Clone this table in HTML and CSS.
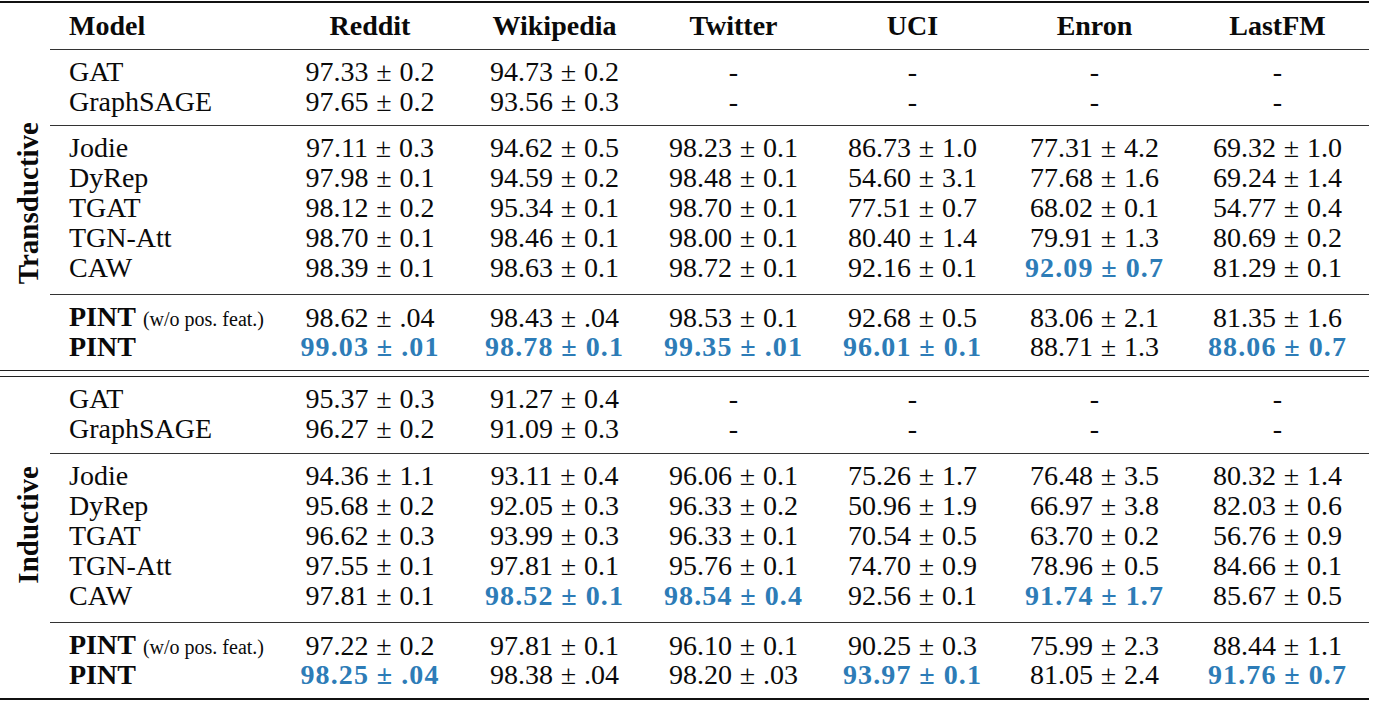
FILE: index.html
```html
<!DOCTYPE html>
<html>
<head>
<meta charset="utf-8">
<link rel="stylesheet" href="styles.css">
</head>
<body>
<div class="table">
  <div class="rule thick"></div>
  <div class="head-wrap">
    <div class="row head">
      <div class="c model">Model</div>
      <div class="c">Reddit</div>
      <div class="c">Wikipedia</div>
      <div class="c">Twitter</div>
      <div class="c">UCI</div>
      <div class="c">Enron</div>
      <div class="c">LastFM</div>
    </div>
  </div>
  <div class="rule mid indent"></div>

  <section class="part part-trans">
    <div class="side"><span class="side-label">Transductive</span></div>
    <div class="body">
      <div class="block b2">
        <div class="row"><div class="c model">GAT</div><div class="c"><span class="n">97.33<span class="pm">±</span>0.2</span></div><div class="c"><span class="n">94.73<span class="pm">±</span>0.2</span></div><div class="c">-</div><div class="c">-</div><div class="c">-</div><div class="c">-</div></div>
        <div class="row"><div class="c model">GraphSAGE</div><div class="c"><span class="n">97.65<span class="pm">±</span>0.2</span></div><div class="c"><span class="n">93.56<span class="pm">±</span>0.3</span></div><div class="c">-</div><div class="c">-</div><div class="c">-</div><div class="c">-</div></div>
      </div>
      <div class="rule mid"></div>
      <div class="block b5">
        <div class="row"><div class="c model">Jodie</div><div class="c"><span class="n">97.11<span class="pm">±</span>0.3</span></div><div class="c"><span class="n">94.62<span class="pm">±</span>0.5</span></div><div class="c"><span class="n">98.23<span class="pm">±</span>0.1</span></div><div class="c"><span class="n">86.73<span class="pm">±</span>1.0</span></div><div class="c"><span class="n">77.31<span class="pm">±</span>4.2</span></div><div class="c"><span class="n">69.32<span class="pm">±</span>1.0</span></div></div>
        <div class="row"><div class="c model">DyRep</div><div class="c"><span class="n">97.98<span class="pm">±</span>0.1</span></div><div class="c"><span class="n">94.59<span class="pm">±</span>0.2</span></div><div class="c"><span class="n">98.48<span class="pm">±</span>0.1</span></div><div class="c"><span class="n">54.60<span class="pm">±</span>3.1</span></div><div class="c"><span class="n">77.68<span class="pm">±</span>1.6</span></div><div class="c"><span class="n">69.24<span class="pm">±</span>1.4</span></div></div>
        <div class="row"><div class="c model">TGAT</div><div class="c"><span class="n">98.12<span class="pm">±</span>0.2</span></div><div class="c"><span class="n">95.34<span class="pm">±</span>0.1</span></div><div class="c"><span class="n">98.70<span class="pm">±</span>0.1</span></div><div class="c"><span class="n">77.51<span class="pm">±</span>0.7</span></div><div class="c"><span class="n">68.02<span class="pm">±</span>0.1</span></div><div class="c"><span class="n">54.77<span class="pm">±</span>0.4</span></div></div>
        <div class="row"><div class="c model">TGN-Att</div><div class="c"><span class="n">98.70<span class="pm">±</span>0.1</span></div><div class="c"><span class="n">98.46<span class="pm">±</span>0.1</span></div><div class="c"><span class="n">98.00<span class="pm">±</span>0.1</span></div><div class="c"><span class="n">80.40<span class="pm">±</span>1.4</span></div><div class="c"><span class="n">79.91<span class="pm">±</span>1.3</span></div><div class="c"><span class="n">80.69<span class="pm">±</span>0.2</span></div></div>
        <div class="row"><div class="c model">CAW</div><div class="c"><span class="n">98.39<span class="pm">±</span>0.1</span></div><div class="c"><span class="n">98.63<span class="pm">±</span>0.1</span></div><div class="c"><span class="n">98.72<span class="pm">±</span>0.1</span></div><div class="c"><span class="n">92.16<span class="pm">±</span>0.1</span></div><div class="c"><span class="n b">92.09<span class="pm">±</span>0.7</span></div><div class="c"><span class="n">81.29<span class="pm">±</span>0.1</span></div></div>
      </div>
      <div class="rule mid"></div>
      <div class="block b2">
        <div class="row"><div class="c model"><b>PINT</b> <small>(w/o pos. feat.)</small></div><div class="c"><span class="n">98.62<span class="pm">±</span>.04</span></div><div class="c"><span class="n">98.43<span class="pm">±</span>.04</span></div><div class="c"><span class="n">98.53<span class="pm">±</span>0.1</span></div><div class="c"><span class="n">92.68<span class="pm">±</span>0.5</span></div><div class="c"><span class="n">83.06<span class="pm">±</span>2.1</span></div><div class="c"><span class="n">81.35<span class="pm">±</span>1.6</span></div></div>
        <div class="row"><div class="c model"><b>PINT</b></div><div class="c"><span class="n b">99.03<span class="pm">±</span>.01</span></div><div class="c"><span class="n b">98.78<span class="pm">±</span>0.1</span></div><div class="c"><span class="n b">99.35<span class="pm">±</span>.01</span></div><div class="c"><span class="n b">96.01<span class="pm">±</span>0.1</span></div><div class="c"><span class="n">88.71<span class="pm">±</span>1.3</span></div><div class="c"><span class="n b">88.06<span class="pm">±</span>0.7</span></div></div>
      </div>
    </div>
  </section>

  <div class="double"></div>

  <section class="part part-ind">
    <div class="side"><span class="side-label">Inductive</span></div>
    <div class="body">
      <div class="block b2 b2x">
        <div class="row"><div class="c model">GAT</div><div class="c"><span class="n">95.37<span class="pm">±</span>0.3</span></div><div class="c"><span class="n">91.27<span class="pm">±</span>0.4</span></div><div class="c">-</div><div class="c">-</div><div class="c">-</div><div class="c">-</div></div>
        <div class="row"><div class="c model">GraphSAGE</div><div class="c"><span class="n">96.27<span class="pm">±</span>0.2</span></div><div class="c"><span class="n">91.09<span class="pm">±</span>0.3</span></div><div class="c">-</div><div class="c">-</div><div class="c">-</div><div class="c">-</div></div>
      </div>
      <div class="rule mid"></div>
      <div class="block b5">
        <div class="row"><div class="c model">Jodie</div><div class="c"><span class="n">94.36<span class="pm">±</span>1.1</span></div><div class="c"><span class="n">93.11<span class="pm">±</span>0.4</span></div><div class="c"><span class="n">96.06<span class="pm">±</span>0.1</span></div><div class="c"><span class="n">75.26<span class="pm">±</span>1.7</span></div><div class="c"><span class="n">76.48<span class="pm">±</span>3.5</span></div><div class="c"><span class="n">80.32<span class="pm">±</span>1.4</span></div></div>
        <div class="row"><div class="c model">DyRep</div><div class="c"><span class="n">95.68<span class="pm">±</span>0.2</span></div><div class="c"><span class="n">92.05<span class="pm">±</span>0.3</span></div><div class="c"><span class="n">96.33<span class="pm">±</span>0.2</span></div><div class="c"><span class="n">50.96<span class="pm">±</span>1.9</span></div><div class="c"><span class="n">66.97<span class="pm">±</span>3.8</span></div><div class="c"><span class="n">82.03<span class="pm">±</span>0.6</span></div></div>
        <div class="row"><div class="c model">TGAT</div><div class="c"><span class="n">96.62<span class="pm">±</span>0.3</span></div><div class="c"><span class="n">93.99<span class="pm">±</span>0.3</span></div><div class="c"><span class="n">96.33<span class="pm">±</span>0.1</span></div><div class="c"><span class="n">70.54<span class="pm">±</span>0.5</span></div><div class="c"><span class="n">63.70<span class="pm">±</span>0.2</span></div><div class="c"><span class="n">56.76<span class="pm">±</span>0.9</span></div></div>
        <div class="row"><div class="c model">TGN-Att</div><div class="c"><span class="n">97.55<span class="pm">±</span>0.1</span></div><div class="c"><span class="n">97.81<span class="pm">±</span>0.1</span></div><div class="c"><span class="n">95.76<span class="pm">±</span>0.1</span></div><div class="c"><span class="n">74.70<span class="pm">±</span>0.9</span></div><div class="c"><span class="n">78.96<span class="pm">±</span>0.5</span></div><div class="c"><span class="n">84.66<span class="pm">±</span>0.1</span></div></div>
        <div class="row"><div class="c model">CAW</div><div class="c"><span class="n">97.81<span class="pm">±</span>0.1</span></div><div class="c"><span class="n b">98.52<span class="pm">±</span>0.1</span></div><div class="c"><span class="n b">98.54<span class="pm">±</span>0.4</span></div><div class="c"><span class="n">92.56<span class="pm">±</span>0.1</span></div><div class="c"><span class="n b">91.74<span class="pm">±</span>1.7</span></div><div class="c"><span class="n">85.67<span class="pm">±</span>0.5</span></div></div>
      </div>
      <div class="rule mid"></div>
      <div class="block b2">
        <div class="row"><div class="c model"><b>PINT</b> <small>(w/o pos. feat.)</small></div><div class="c"><span class="n">97.22<span class="pm">±</span>0.2</span></div><div class="c"><span class="n">97.81<span class="pm">±</span>0.1</span></div><div class="c"><span class="n">96.10<span class="pm">±</span>0.1</span></div><div class="c"><span class="n">90.25<span class="pm">±</span>0.3</span></div><div class="c"><span class="n">75.99<span class="pm">±</span>2.3</span></div><div class="c"><span class="n">88.44<span class="pm">±</span>1.1</span></div></div>
        <div class="row"><div class="c model"><b>PINT</b></div><div class="c"><span class="n b">98.25<span class="pm">±</span>.04</span></div><div class="c"><span class="n">98.38<span class="pm">±</span>.04</span></div><div class="c"><span class="n">98.20<span class="pm">±</span>.03</span></div><div class="c"><span class="n b">93.97<span class="pm">±</span>0.1</span></div><div class="c"><span class="n">81.05<span class="pm">±</span>2.4</span></div><div class="c"><span class="n b">91.76<span class="pm">±</span>0.7</span></div></div>
      </div>
    </div>
  </section>
  <div class="rule thick"></div>
</div>
</body>
</html>
```

FILE: styles.css
```css
html, body {
  margin: 0;
  padding: 0;
  background: #ffffff;
}

body {
  font-family: "Liberation Serif", "Times New Roman", serif;
  font-size: 28px;
  color: #0a0a0a;
}

.table {
  width: 1369px;
  padding-top: 1px;
}

.rule {
  height: 1px;
  background: #333333;
}

.rule.thick {
  height: 2px;
  background: #111111;
}

.rule.indent {
  margin-left: 50px;
}

.double {
  height: 7px;
  border-top: 1px solid #222222;
  border-bottom: 1px solid #222222;
  box-sizing: border-box;
}

.head-wrap {
  padding: 8px 0 8px 50px;
}

.row {
  display: grid;
  grid-template-columns: 226px 188px 181px 177px 181px 183px 183px;
  height: 30px;
  line-height: 30px;
  align-items: center;
}

.row.head .c {
  font-weight: bold;
}

.c {
  text-align: center;
  white-space: nowrap;
}

.c.model {
  text-align: left;
  padding-left: 19px;
}

.c.model small {
  font-size: 20px;
}

.n .pm {
  display: inline-block;
  margin: 0 0.28em;
}

.n.b {
  font-weight: bold;
  color: #2d7cb7;
  letter-spacing: 0.04em;
}

.part {
  display: flex;
}

.side {
  width: 50px;
  flex: none;
  display: flex;
  align-items: center;
  justify-content: center;
  padding-left: 6px;
  box-sizing: border-box;
}

.part-trans .side {
  padding-bottom: 14px;
}

.part-ind .side {
  padding-bottom: 25px;
}

.side-label {
  writing-mode: vertical-rl;
  transform: rotate(180deg);
  font-weight: bold;
  font-size: 29px;
  line-height: 30px;
}

.body {
  flex: 1;
}

.block.b2 {
  padding: 7px 0 8px;
}

.block.b2.b2x {
  padding: 7px 0 9px;
}

.block.b5 {
  padding: 7px 0 11px;
}
```
